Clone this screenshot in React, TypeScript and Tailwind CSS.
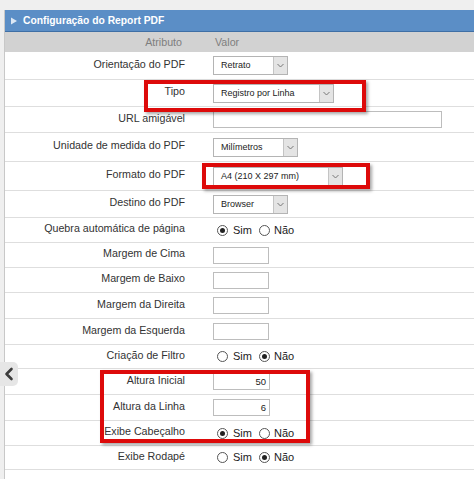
type Row = {
  label: string;
  h: string;
  kind: "select" | "input" | "radio";
  value?: string;
  width?: string;
  checked?: "sim" | "nao";
};

const rows: Row[] = [
  { label: "Orientação do PDF", h: "h-[28px]", kind: "select", value: "Retrato", width: "w-[75px]" },
  { label: "Tipo", h: "h-[27px]", kind: "select", value: "Registro por Linha", width: "w-[121px]" },
  { label: "URL amigável", h: "h-[26px]", kind: "input", width: "w-[229px]" },
  { label: "Unidade de medida do PDF", h: "h-[29px]", kind: "select", value: "Milímetros", width: "w-[85px]" },
  { label: "Formato do PDF", h: "h-[29px]", kind: "select", value: "A4 (210 X 297 mm)", width: "w-[130px]" },
  { label: "Destino do PDF", h: "h-[27px]", kind: "select", value: "Browser", width: "w-[75px]" },
  { label: "Quebra automática de página", h: "h-[25px]", kind: "radio", checked: "sim" },
  { label: "Margem de Cima", h: "h-[25px]", kind: "input", width: "w-[56px]" },
  { label: "Margem de Baixo", h: "h-[25px]", kind: "input", width: "w-[56px]" },
  { label: "Margem da Direita", h: "h-[26px]", kind: "input", width: "w-[56px]" },
  { label: "Margem da Esquerda", h: "h-[26px]", kind: "input", width: "w-[56px]" },
  { label: "Criação de Filtro", h: "h-[24px]", kind: "radio", checked: "nao" },
  { label: "Altura Inicial", h: "h-[26px]", kind: "input", value: "50", width: "w-[57px]" },
  { label: "Altura da Linha", h: "h-[26px]", kind: "input", value: "6", width: "w-[57px]" },
  { label: "Exibe Cabeçalho", h: "h-[25px]", kind: "radio", checked: "sim" },
  { label: "Exibe Rodapé", h: "h-[24px]", kind: "radio", checked: "nao" },
];

const Select = ({ value, width }: { value: string; width: string }) => (
  <div className={`flex h-[19px] ${width} border border-[#b4b4b4] bg-white`}>
    <div className="flex-1 pl-[7px] text-[9px] leading-[17px] text-[#222] whitespace-nowrap overflow-hidden">
      {value}
    </div>
    <div className="flex w-[14px] items-center justify-center border-l border-[#c4c4c4] bg-[#e4e4e4]">
      <svg width="7" height="5" viewBox="0 0 7 5">
        <path d="M0.5 1 L3.5 4 L6.5 1" fill="none" stroke="#777" strokeWidth="1" />
      </svg>
    </div>
  </div>
);

const Radio = ({ on }: { on: boolean }) => (
  <span className="flex h-[11px] w-[11px] items-center justify-center rounded-full border border-[#555] bg-white">
    {on && <span className="h-[5px] w-[5px] rounded-full bg-[#222]" />}
  </span>
);

const Radios = ({ checked }: { checked: "sim" | "nao" }) => (
  <div className="flex items-center pl-[4px] text-[11px] text-[#222]">
    <Radio on={checked === "sim"} />
    <span className="ml-[5px] mr-[7px]">Sim</span>
    <Radio on={checked === "nao"} />
    <span className="ml-[4px]">Não</span>
  </div>
);

const App = () => {
  return (
    <div
      className="relative h-[479px] w-[474px] overflow-hidden bg-[#efefef]"
      style={{ fontFamily: '"Liberation Sans", Arial, sans-serif' }}
    >
      <div className="ml-[4px] mt-[10px] border-l border-[#c8c8c8] bg-white pb-[20px]">
        <div className="flex h-[22px] items-center border-b border-[#3f6fa5] bg-[#5b8ec6] pl-[5px]">
          <svg width="8" height="8" viewBox="0 0 8 8">
            <path d="M1 0.5 L7 4 L1 7.5 Z" fill="#dce7f4" />
          </svg>
          <span className="ml-[5px] text-[10.3px] font-bold text-white">Configuração do Report PDF</span>
        </div>
        <div className="flex h-[20px] items-center bg-[#d2d2d2] text-[10.7px] text-[#7e7e7e]">
          <div className="w-[196px] pr-[19px] text-right">Atributo</div>
          <div className="pl-[14px]">Valor</div>
        </div>
        {rows.map((r) => (
          <div key={r.label} className={`flex ${r.h} items-center border-b border-[#dedede]`}>
            <div className="w-[196px] pb-[3px] pr-[16px] text-right text-[10.7px] text-[#333] whitespace-nowrap">
              {r.label}
            </div>
            <div className="pl-[12px]">
              {r.kind === "select" && <Select value={r.value ?? ""} width={r.width ?? ""} />}
              {r.kind === "input" && (
                <div
                  className={`h-[17px] ${r.width} border border-[#bdbdbd] bg-white pr-[3px] text-right text-[9.5px] leading-[15px] text-[#222]`}
                >
                  {r.value}
                </div>
              )}
              {r.kind === "radio" && <Radios checked={r.checked ?? "sim"} />}
            </div>
          </div>
        ))}
      </div>

      {/* red annotation boxes drawn over the form */}
      <div className="absolute left-[144px] top-[80px] h-[32px] w-[222px] border-[4px] border-[#dd0a0a] shadow-[2px_2px_3px_rgba(0,0,0,0.35)]" />
      <div className="absolute left-[202px] top-[163px] h-[26px] w-[168px] border-[4px] border-[#dd0a0a] shadow-[2px_2px_3px_rgba(0,0,0,0.35)]" />
      <div className="absolute left-[100px] top-[370px] h-[73px] w-[210px] border-[4px] border-[#dd0a0a] shadow-[2px_2px_3px_rgba(0,0,0,0.35)]" />

      {/* side collapse tab */}
      <div className="absolute left-0 top-[362px] flex h-[24px] w-[18px] items-center justify-center rounded-r-[5px] bg-[#e6e6e6]">
        <svg width="10" height="14" viewBox="0 0 10 14">
          <path d="M7.5 2 L2.5 7 L7.5 12" fill="none" stroke="#3d3d3d" strokeWidth="2.6" strokeLinecap="round" strokeLinejoin="round" />
        </svg>
      </div>
    </div>
  );
};

export default App;
